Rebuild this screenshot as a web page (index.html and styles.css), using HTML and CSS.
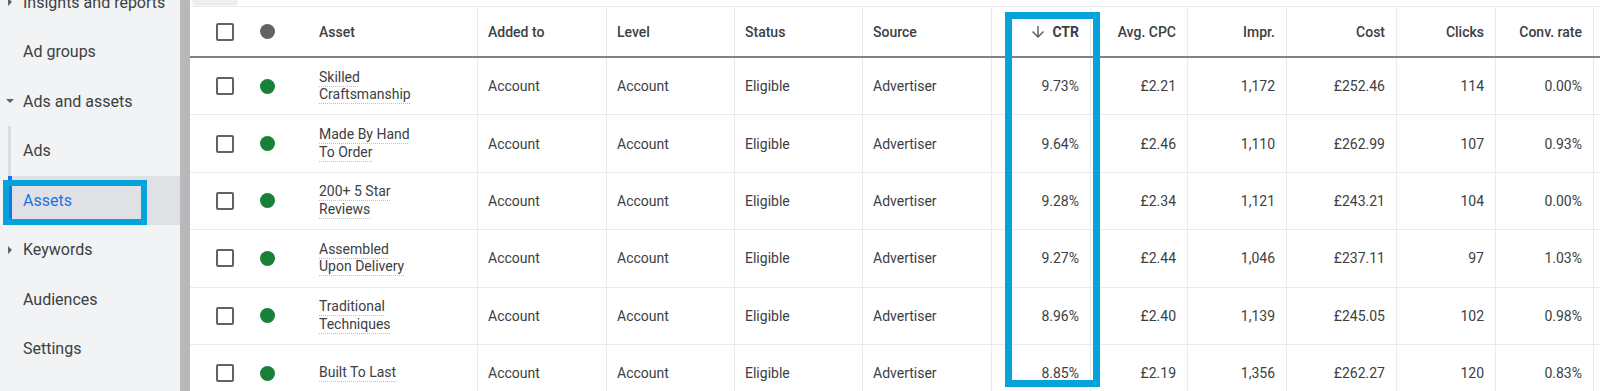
FILE: index.html
```html
<!DOCTYPE html>
<html>
<head>
    <title>Assets</title>
    <link rel="stylesheet" href="styles.css">
</head>
<body>
<div class="page">
    <div class="sidebar">
        <div class="nav">
            <div class="nav-item"><span class="caret"><span class="tri-right"></span></span>Insights and reports</div>
            <div class="nav-item"><span class="caret"></span>Ad groups</div>
            <div class="nav-item"><span class="caret"><span class="tri-down"></span></span>Ads and assets</div>
            <div class="nav-item child">Ads</div>
            <div class="nav-item child active">Assets<span class="mark"></span></div>
            <div class="nav-item"><span class="caret"><span class="tri-right"></span></span>Keywords</div>
            <div class="nav-item"><span class="caret"></span>Audiences</div>
            <div class="nav-item"><span class="caret"></span>Settings</div>
        </div>
    </div>
    <div class="divider"></div>
    <div class="main">
        <div class="topstrip"><div class="pill"></div></div>

        <div class="row head">
            <div class="cell cb-cell"><span class="checkbox"></span></div>
            <div class="cell dot-cell"><span class="dot grey"></span></div>
            <div class="cell">Asset</div>
            <div class="cell sep">Added to</div>
            <div class="cell sep">Level</div>
            <div class="cell sep">Status</div>
            <div class="cell sep">Source</div>
            <div class="cell sep num sorted">
                <svg class="arrow" width="18" height="18" viewBox="0 0 24 24"><path d="M20 12l-1.41-1.41L13 16.17V4h-2v12.17l-5.58-5.59L4 12l8 8 8-8z" fill="#5f6368"/></svg>CTR
            </div>
            <div class="cell sep num">Avg. CPC</div>
            <div class="cell sep num">Impr.</div>
            <div class="cell sep num">Cost</div>
            <div class="cell sep num">Clicks</div>
            <div class="cell sep num">Conv. rate</div>
            <div class="cell sep"></div>
        </div>

        <div class="row">
            <div class="cell cb-cell"><span class="checkbox"></span></div>
            <div class="cell dot-cell"><span class="dot"></span></div>
            <div class="cell"><span class="asset">Skilled<br>Craftsmanship</span></div>
            <div class="cell sep">Account</div>
            <div class="cell sep">Account</div>
            <div class="cell sep">Eligible</div>
            <div class="cell sep">Advertiser</div>
            <div class="cell sep num">9.73%</div>
            <div class="cell sep num">£2.21</div>
            <div class="cell sep num">1,172</div>
            <div class="cell sep num">£252.46</div>
            <div class="cell sep num">114</div>
            <div class="cell sep num">0.00%</div>
            <div class="cell sep"></div>
        </div>

        <div class="row">
            <div class="cell cb-cell"><span class="checkbox"></span></div>
            <div class="cell dot-cell"><span class="dot"></span></div>
            <div class="cell"><span class="asset">Made By Hand<br>To Order</span></div>
            <div class="cell sep">Account</div>
            <div class="cell sep">Account</div>
            <div class="cell sep">Eligible</div>
            <div class="cell sep">Advertiser</div>
            <div class="cell sep num">9.64%</div>
            <div class="cell sep num">£2.46</div>
            <div class="cell sep num">1,110</div>
            <div class="cell sep num">£262.99</div>
            <div class="cell sep num">107</div>
            <div class="cell sep num">0.93%</div>
            <div class="cell sep"></div>
        </div>

        <div class="row">
            <div class="cell cb-cell"><span class="checkbox"></span></div>
            <div class="cell dot-cell"><span class="dot"></span></div>
            <div class="cell"><span class="asset">200+ 5 Star<br>Reviews</span></div>
            <div class="cell sep">Account</div>
            <div class="cell sep">Account</div>
            <div class="cell sep">Eligible</div>
            <div class="cell sep">Advertiser</div>
            <div class="cell sep num">9.28%</div>
            <div class="cell sep num">£2.34</div>
            <div class="cell sep num">1,121</div>
            <div class="cell sep num">£243.21</div>
            <div class="cell sep num">104</div>
            <div class="cell sep num">0.00%</div>
            <div class="cell sep"></div>
        </div>

        <div class="row">
            <div class="cell cb-cell"><span class="checkbox"></span></div>
            <div class="cell dot-cell"><span class="dot"></span></div>
            <div class="cell"><span class="asset">Assembled<br>Upon Delivery</span></div>
            <div class="cell sep">Account</div>
            <div class="cell sep">Account</div>
            <div class="cell sep">Eligible</div>
            <div class="cell sep">Advertiser</div>
            <div class="cell sep num">9.27%</div>
            <div class="cell sep num">£2.44</div>
            <div class="cell sep num">1,046</div>
            <div class="cell sep num">£237.11</div>
            <div class="cell sep num">97</div>
            <div class="cell sep num">1.03%</div>
            <div class="cell sep"></div>
        </div>

        <div class="row">
            <div class="cell cb-cell"><span class="checkbox"></span></div>
            <div class="cell dot-cell"><span class="dot"></span></div>
            <div class="cell"><span class="asset">Traditional<br>Techniques</span></div>
            <div class="cell sep">Account</div>
            <div class="cell sep">Account</div>
            <div class="cell sep">Eligible</div>
            <div class="cell sep">Advertiser</div>
            <div class="cell sep num">8.96%</div>
            <div class="cell sep num">£2.40</div>
            <div class="cell sep num">1,139</div>
            <div class="cell sep num">£245.05</div>
            <div class="cell sep num">102</div>
            <div class="cell sep num">0.98%</div>
            <div class="cell sep"></div>
        </div>

        <div class="row">
            <div class="cell cb-cell"><span class="checkbox"></span></div>
            <div class="cell dot-cell"><span class="dot"></span></div>
            <div class="cell"><span class="asset">Built To Last</span></div>
            <div class="cell sep">Account</div>
            <div class="cell sep">Account</div>
            <div class="cell sep">Eligible</div>
            <div class="cell sep">Advertiser</div>
            <div class="cell sep num">8.85%</div>
            <div class="cell sep num">£2.19</div>
            <div class="cell sep num">1,356</div>
            <div class="cell sep num">£262.27</div>
            <div class="cell sep num">120</div>
            <div class="cell sep num">0.83%</div>
            <div class="cell sep"></div>
        </div>

        <div class="ctr-mark"></div>
    </div>
</div>
</body>
</html>
```

FILE: styles.css
```css
body {
    margin: 0;
    font-family: 'Roboto', 'Liberation Sans', sans-serif;
    color: #3c4043;
    background-color: #fff;
    overflow: hidden;
}

.page {
    display: flex;
    height: 391px;
    overflow: hidden;
}

.sidebar {
    width: 180px;
    flex: 0 0 180px;
    background-color: #f1f3f4;
    overflow: hidden;
}

.nav {
    margin-top: -22.5px;
}

.nav-item {
    position: relative;
    display: flex;
    align-items: center;
    height: 49.5px;
    padding-left: 6px;
    font-size: 16px;
    color: #3c4043;
    box-sizing: border-box;
}

.caret {
    display: inline-flex;
    align-items: center;
    width: 17px;
    height: 10px;
}

.tri-right {
    width: 0;
    height: 0;
    margin-left: 2px;
    border-top: 4px solid transparent;
    border-bottom: 4px solid transparent;
    border-left: 4px solid #5f6368;
}

.tri-down {
    width: 0;
    height: 0;
    border-left: 4px solid transparent;
    border-right: 4px solid transparent;
    border-top: 4px solid #5f6368;
}

.nav-item.child {
    margin-left: 8px;
    padding-left: 12px;
    border-left: 3px solid #dadce0;
}

.nav-item.active {
    padding-left: 11px;
    border-left: 4px solid #1a73e8;
    background-color: #dfe1e4;
    color: #1a73e8;
}

.mark {
    position: absolute;
    left: -9px;
    top: 4px;
    width: 144px;
    bottom: 0;
    border: 6px solid #06a2db;
    box-sizing: border-box;
}

.divider {
    flex: 0 0 10px;
    background-color: #b6b8ba;
}

.main {
    position: relative;
    flex: 1;
    overflow: hidden;
}

.topstrip {
    height: 6px;
    overflow: hidden;
}

.pill {
    width: 46px;
    height: 4px;
    margin-left: 2px;
    border-radius: 0 0 20px 20px;
    background-color: #eeeeee;
    box-shadow: 0 1px 2px rgba(0, 0, 0, 0.12);
}

.row {
    display: grid;
    grid-template-columns: 58px 71px 158px 129px 128px 128px 129px 99px 97px 99px 110px 99px 98px 1fr;
    height: 57.4px;
    box-sizing: border-box;
    border-bottom: 1px solid #e8eaed;
    font-size: 14px;
}

.row.head {
    height: 52px;
    border-top: 1px solid #e8eaed;
    border-bottom: 2px solid #7f8386;
    font-weight: 500;
}

.cell {
    display: flex;
    align-items: center;
    padding-left: 10px;
    box-sizing: border-box;
    white-space: nowrap;
}

.cb-cell {
    padding-left: 26px;
}

.dot-cell {
    padding-left: 12px;
}

.cell.cb-cell + .cell.dot-cell + .cell {
    padding-left: 0;
}

.sep {
    border-left: 1px solid #e8eaed;
}

.num {
    justify-content: flex-end;
    padding-left: 0;
    padding-right: 11px;
}

.sorted {
    font-weight: 700;
    color: #3c4043;
}

.arrow {
    margin-right: 5px;
}

.checkbox {
    display: inline-block;
    width: 18px;
    height: 18px;
    border: 2px solid #5f6368;
    border-radius: 2px;
    box-sizing: border-box;
}

.dot {
    display: inline-block;
    width: 15px;
    height: 15px;
    border-radius: 50%;
    background-color: #188038;
}

.dot.grey {
    background-color: #5f6368;
}

.asset {
    line-height: 17.5px;
    text-decoration: underline dotted #bdc1c6;
    text-decoration-thickness: 1px;
    text-underline-offset: 4px;
}

.ctr-mark {
    position: absolute;
    left: 815px;
    top: 12px;
    width: 95px;
    height: 375px;
    border: 7px solid #06a2db;
    box-sizing: border-box;
}
```
